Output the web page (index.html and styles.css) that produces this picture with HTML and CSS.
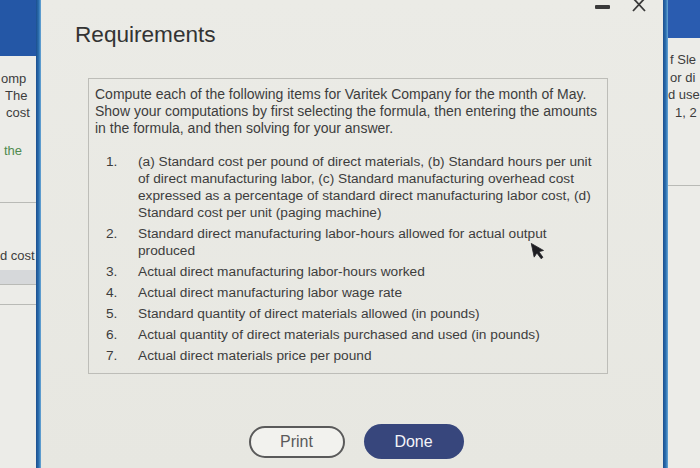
FILE: index.html
```html
<!DOCTYPE html>
<html>
<head>
<meta charset="utf-8">
<link rel="stylesheet" href="styles.css">
</head>
<body>
<div class="screen">
  <aside class="side side-left">
    <div class="side-head"></div>
    <div class="side-body">
      <div class="sl l1">omp</div>
      <div class="sl l2">The</div>
      <div class="sl l3">cost</div>
      <div class="sl l4 green">the</div>
      <div class="rule r1"></div>
      <div class="sl l5">d cost</div>
      <div class="band"></div>
      <div class="rule r2"></div>
    </div>
  </aside>
  <div class="edge"></div>
  <main class="modal">
    <div class="controls">
      <span class="min"></span>
      <svg class="close" width="16" height="16" viewBox="0 0 16 16"><path d="M2 1 L14 14 M14 1 L2 14" stroke="#3a3a3a" stroke-width="1.8" fill="none"/></svg>
    </div>
    <h1 class="title">Requirements</h1>
    <section class="box">
      <p class="intro">
        <span class="ln">Compute each of the following items for Varitek Company for the month of May.</span>
        <span class="ln">Show your computations by first selecting the formula, then entering the amounts</span>
        <span class="ln">in the formula, and then solving for your answer.</span>
      </p>
      <ol class="list">
        <li><span class="num">1.</span><span class="txt">
          <span class="ln">(a) Standard cost per pound of direct materials, (b) Standard hours per unit</span>
          <span class="ln">of direct manufacturing labor, (c) Standard manufacturing overhead cost</span>
          <span class="ln">expressed as a percentage of standard direct manufacturing labor cost, (d)</span>
          <span class="ln">Standard cost per unit (paging machine)</span></span></li>
        <li><span class="num">2.</span><span class="txt">
          <span class="ln">Standard direct manufacturing labor-hours allowed for actual output</span>
          <span class="ln">produced</span></span></li>
        <li><span class="num">3.</span><span class="txt"><span class="ln">Actual direct manufacturing labor-hours worked</span></span></li>
        <li><span class="num">4.</span><span class="txt"><span class="ln">Actual direct manufacturing labor wage rate</span></span></li>
        <li><span class="num">5.</span><span class="txt"><span class="ln">Standard quantity of direct materials allowed (in pounds)</span></span></li>
        <li><span class="num">6.</span><span class="txt"><span class="ln">Actual quantity of direct materials purchased and used (in pounds)</span></span></li>
        <li><span class="num">7.</span><span class="txt"><span class="ln">Actual direct materials price per pound</span></span></li>
      </ol>
    </section>
    <div class="actions">
      <button class="btn btn-print">Print</button>
      <button class="btn btn-done">Done</button>
    </div>
    <svg class="cursor" width="14" height="20" viewBox="0 0 14 20"><path d="M1 1 L1 15 L4.5 11.5 L7.5 18 L9.5 17 L6.8 10.6 L11.5 10.4 Z" fill="#1e1e22" stroke="#2a2a2e" stroke-width="0.8"/></svg>
  </main>
  <div class="edge edge-right"></div>
  <aside class="side side-right">
    <div class="side-head short"></div>
    <div class="side-body">
      <div class="sr s1">f Sle</div>
      <div class="sr s2">or di</div>
      <div class="sr s3">d use</div>
      <div class="sr s4">1, 2</div>
      <div class="rule r3"></div>
    </div>
  </aside>
</div>
</body>
</html>
```

FILE: styles.css
```css
* { box-sizing: border-box; }
html, body { margin: 0; padding: 0; }
body {
  width: 700px;
  height: 468px;
  overflow: hidden;
  font-family: "Liberation Sans", Arial, sans-serif;
  background: #e8e8e2;
}
.screen {
  display: flex;
  width: 700px;
  height: 468px;
}
.side {
  background: #ecece8;
  overflow: hidden;
  display: flex;
  flex-direction: column;
}
.side-left { width: 36px; }
.side-right { width: 32px; }
.side-head {
  height: 56px;
  background: #2457a6;
  flex: none;
}
.side-head.short { height: 38px; background: #2a5cb0; }
.side-body {
  position: relative;
  flex: 1;
  font-size: 13px;
  color: #3c3c3c;
  white-space: nowrap;
}
.sl { line-height: 17px; height: 17px; }
.sr { line-height: 17.5px; height: 17.5px; font-size: 13px; }
.l1 { margin-top: 14px; margin-left: 1px; }
.l2 { margin-left: 5px; }
.l3 { margin-left: 6px; }
.l4 { margin-top: 21px; margin-left: 4px; }
.green { color: #4f8a4f; }
.rule { height: 1px; background: #b9bab6; }
.r1 { margin-top: 43px; }
.l5 { margin-top: 44px; margin-left: 0; }
.band { height: 15px; margin-top: 6px; background: #d6d8da; border-bottom: 1px solid #b9bab6; }
.r2 { margin-top: 19px; }
.s1 { margin-top: 13px; margin-left: 2px; }
.s2 { margin-left: 2px; }
.s3 { margin-left: 0; }
.s4 { margin-left: 7px; }
.r3 { margin-top: 64px; }

.edge {
  width: 5px;
  background: linear-gradient(to right, #1c4f8e 0, #2b6fb0 55%, #6aa8d6 100%);
  flex: none;
}

.modal {
  flex: 1;
  position: relative;
  background: linear-gradient(to bottom, #ebebe6 0, #e7e7e1 100%);
  padding: 22px 0 0 34px;
  color: #3b3b3b;
}
.controls {
  position: absolute;
  top: -3px;
  right: 16px;
  display: flex;
  align-items: flex-start;
  gap: 21px;
}
.min {
  display: block;
  width: 15px;
  height: 4px;
  background: #3a3a3a;
  margin-top: 8px;
  border-radius: 1px;
}
.close { display: block; }
.title {
  margin: 0;
  font-size: 22.6px;
  line-height: 26px;
  font-weight: normal;
  color: #333;
}
.box {
  margin: 30px 0 0 13px;
  width: 520px;
  border: 1px solid #bdbdb8;
  padding: 7px 6px 9px 6px;
  font-size: 14px;
  line-height: 17px;
  color: #3d3d3d;
}
.ln { display: block; white-space: nowrap; }
.intro { margin: 0; }
.list {
  list-style: none;
  margin: 16px 0 0 0;
  padding: 0;
  font-size: 13.7px;
}
.list li {
  display: flex;
  margin-bottom: 4px;
}
.list li:last-child { margin-bottom: 0; }
.num { width: 43px; padding-left: 11px; flex: none; }
.txt { display: block; }

.actions {
  display: flex;
  justify-content: center;
  gap: 19px;
  margin-top: 50px;
  padding-right: 26px;
  align-items: center;
}
.btn {
  font-family: "Liberation Sans", Arial, sans-serif;
  font-size: 16px;
  border-radius: 18px;
  height: 32px;
  cursor: pointer;
}
.btn-print {
  width: 96px;
  background: #f2f2ee;
  border: 2px solid #5a5a5a;
  color: #5a5a5a;
}
.btn-done {
  width: 100px;
  height: 35px;
  background: #37467c;
  border: none;
  color: #f4f4f8;
}
.cursor {
  position: absolute;
  left: 491px;
  top: 241px;
  transform: rotate(-12deg);
}
```
